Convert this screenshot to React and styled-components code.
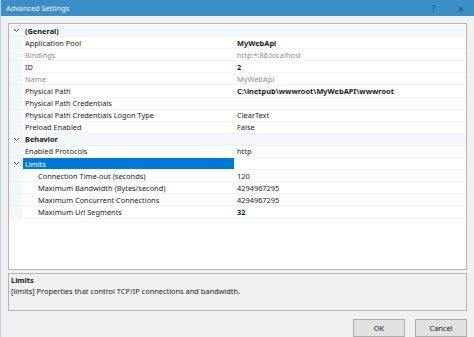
import React from 'react';
import styled, { createGlobalStyle } from 'styled-components';

const Global = createGlobalStyle`
  html, body { margin: 0; padding: 0; background: #f0f0f0; }
  body { font-family: "Noto Sans", "Open Sans", sans-serif; }
`;

const Window = styled.div`
  width: 474px;
  height: 337px;
  display: flex;
  flex-direction: column;
  background: #f0f0f0;
  box-sizing: border-box;
  border-left: 1px solid #b9d4e8;
  overflow: hidden;
`;

const TitleBar = styled.div`
  height: 16px;
  display: flex;
  align-items: center;
  background: #3b8ec6;
  color: #f2f7fb;
  font-size: 7.3px;
  padding-left: 5px;
  flex-shrink: 0;
`;

const Title = styled.div`
  flex: 1;
`;

const TitleButton = styled.span`
  width: ${p => p.w}px;
  text-align: center;
  font-size: ${p => p.big ? '11px' : '8px'};
  color: #1f4f72;
`;

const Body = styled.div`
  flex: 1;
  display: flex;
  flex-direction: column;
  padding: 7px 7px 0 7px;
`;

const Grid = styled.div`
  height: 247px;
  box-sizing: border-box;
  border: 1px solid #b4b4b4;
  background: #fff;
  padding-top: 1px;
  display: flex;
  flex-direction: column;
`;

const Row = styled.div`
  height: 12.1px;
  display: flex;
  align-items: center;
  font-size: 7.4px;
  background: ${p => p.category ? '#f3f6fa' : '#fff'};
  border-bottom: 1px solid #f1f3f6;
  box-sizing: border-box;
`;

const Gutter = styled.div`
  width: 14px;
  height: 100%;
  display: flex;
  align-items: center;
  justify-content: center;
  background: #f3f6fa;
  flex-shrink: 0;
`;

const Name = styled.div`
  width: ${p => 209 - p.indent}px;
  padding-left: ${p => p.indent + 2}px;
  height: 100%;
  display: flex;
  align-items: center;
  flex-shrink: 0;
  background: ${p => p.selected ? '#0078d7' : 'transparent'};
  color: ${p => p.selected ? '#fff' : p.muted ? '#8c8c8c' : '#1a1a1a'};
  font-weight: ${p => p.bold ? 700 : 400};
  white-space: nowrap;
`;

const Value = styled.div`
  padding-left: 3px;
  color: ${p => p.muted ? '#8c8c8c' : '#1a1a1a'};
  font-weight: ${p => p.bold ? 700 : 400};
  white-space: nowrap;
`;

const Description = styled.div`
  margin-top: 3px;
  height: 38px;
  box-sizing: border-box;
  border: 1px solid #b4b4b4;
  background: #f0f0f0;
  padding: 1px 2px;
  font-size: 7.4px;
  color: #1a1a1a;
  line-height: 11px;
`;

const DescTitle = styled.div`
  font-weight: 700;
`;

const Footer = styled.div`
  display: flex;
  justify-content: flex-end;
  gap: 10px;
  padding-top: 8px;
`;

const Button = styled.div`
  width: 52px;
  height: 18px;
  box-sizing: border-box;
  border: 1px solid #adadad;
  background: #e1e1e1;
  display: flex;
  align-items: center;
  justify-content: center;
  font-size: 7.4px;
  color: #1a1a1a;
`;

const Chevron = () => (
  <svg width="7" height="5" viewBox="0 0 7 5">
    <path d="M1 1 L3.5 3.5 L6 1" fill="none" stroke="#555" strokeWidth="1" />
  </svg>
);

const rows = [
  { name: '(General)', category: true },
  { name: 'Application Pool', value: 'MyWebApi', boldValue: true },
  { name: 'Bindings', value: 'http:*:86:localhost', muted: true },
  { name: 'ID', value: '2', boldValue: true },
  { name: 'Name', value: 'MyWebApi', muted: true },
  { name: 'Physical Path', value: 'C:\\inetpub\\wwwroot\\MyWebAPI\\wwwroot', boldValue: true },
  { name: 'Physical Path Credentials', value: '' },
  { name: 'Physical Path Credentials Logon Type', value: 'ClearText' },
  { name: 'Preload Enabled', value: 'False' },
  { name: 'Behavior', category: true },
  { name: 'Enabled Protocols', value: 'http' },
  { name: 'Limits', expandable: true, selected: true, value: '' },
  { name: 'Connection Time-out (seconds)', value: '120', indent: 13 },
  { name: 'Maximum Bandwidth (Bytes/second)', value: '4294967295', indent: 13 },
  { name: 'Maximum Concurrent Connections', value: '4294967295', indent: 13 },
  { name: 'Maximum Url Segments', value: '32', indent: 13, boldValue: true },
];

export default function App() {
  return (
    <Window>
      <Global />
      <TitleBar>
        <Title>Advanced Settings</Title>
        <TitleButton w={29}>?</TitleButton>
        <TitleButton w={26} big>×</TitleButton>
      </TitleBar>
      <Body>
        <Grid>
          {rows.map(r => (
            <Row key={r.name} category={r.category}>
              <Gutter>{(r.category || r.expandable) && <Chevron />}</Gutter>
              <Name
                indent={r.indent || 0}
                bold={r.category}
                muted={r.muted}
                selected={r.selected}
              >
                {r.name}
              </Name>
              {!r.category && (
                <Value muted={r.muted} bold={r.boldValue}>{r.value}</Value>
              )}
            </Row>
          ))}
        </Grid>
        <Description>
          <DescTitle>Limits</DescTitle>
          <div>[limits] Properties that control TCP/IP connections and bandwidth.</div>
        </Description>
        <Footer>
          <Button>OK</Button>
          <Button>Cancel</Button>
        </Footer>
      </Body>
    </Window>
  );
}
